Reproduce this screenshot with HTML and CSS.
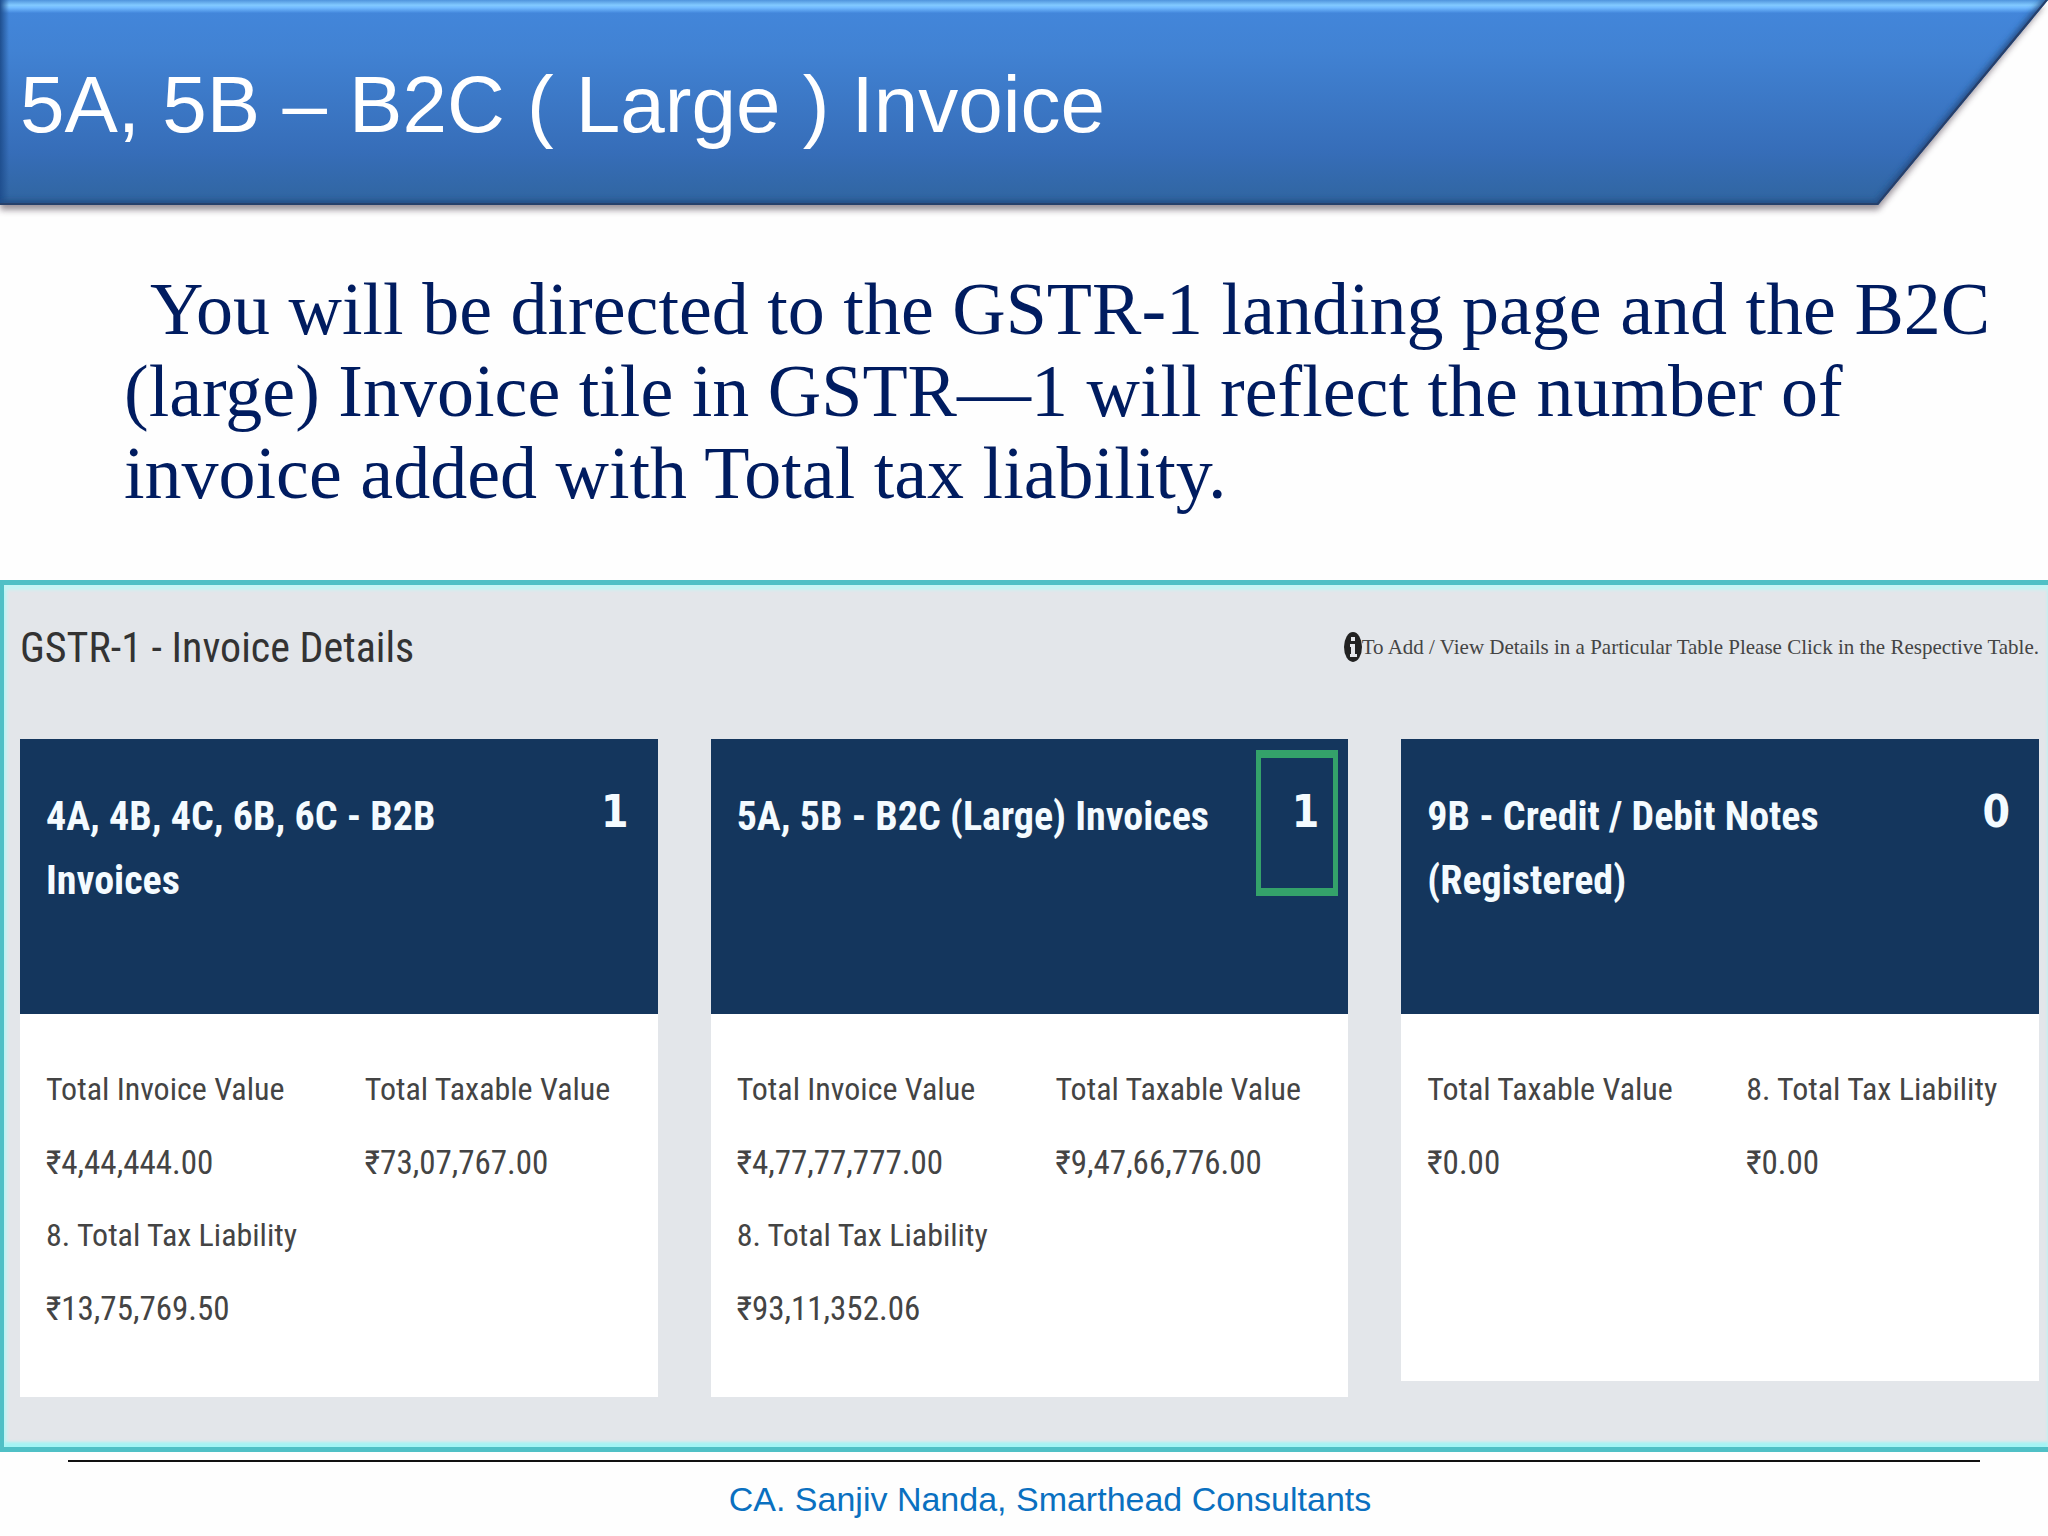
FILE: index.html
```
<!DOCTYPE html>
<html lang="en">
<head>
  <meta charset="UTF-8">
  <title>5A, 5B – B2C ( Large ) Invoice</title>
  <link rel="stylesheet" href="styles.css">
</head>
<body>
  <header class="banner">
    <svg class="banner-bg" viewBox="0 0 2048 220" preserveAspectRatio="none" aria-hidden="true">
      <defs>
        <linearGradient id="fill" x1="0" y1="0" x2="0" y2="1">
          <stop offset="0" stop-color="#4387dc"/>
          <stop offset="0.25" stop-color="#4182d3"/>
          <stop offset="0.75" stop-color="#366db8"/>
          <stop offset="1" stop-color="#30659f"/>
        </linearGradient>
        <linearGradient id="shine" x1="0" y1="0" x2="0" y2="1">
          <stop offset="0" stop-color="#4f93dc"/>
          <stop offset="0.4" stop-color="#82caff"/>
          <stop offset="0.6" stop-color="#72baff"/>
          <stop offset="1" stop-color="#4387dc"/>
        </linearGradient>
        <linearGradient id="edge" x1="0" y1="0" x2="1" y2="0">
          <stop offset="0" stop-color="#1f4f8f"/>
          <stop offset="1" stop-color="#1f4f8f" stop-opacity="0"/>
        </linearGradient>
        <filter id="soft" x="-5%" y="-20%" width="110%" height="140%"><feGaussianBlur stdDeviation="3"/></filter>
        <clipPath id="shape"><path d="M0 0H2048L1878 205H0Z"/></clipPath>
      </defs>
      <path d="M0 6H2044L1878 210H0Z" fill="#4a3a4a" opacity="0.55" filter="url(#soft)"/>
      <path d="M0 0H2048L1878 205H0Z" fill="url(#fill)"/>
      <g clip-path="url(#shape)">
        <path d="M0 0H2048V13H0Z" fill="url(#shine)"/>
        <path d="M0 0H9V205H0Z" fill="url(#edge)"/>
        <path d="M0 205H1878L2048 0" fill="none" stroke="#234a80" stroke-width="8" filter="url(#soft)"/>
        <path d="M0 205H1878L2048 0" fill="none" stroke="#27406b" stroke-width="4"/>
      </g>
    </svg>
    <h1>5A, 5B – B2C ( Large ) Invoice</h1>
  </header>

  <main>
    <p class="intro">You will be directed to the GSTR-1 landing page and the B2C<br>(large) Invoice tile in GSTR—1 will reflect the number of<br>invoice added with Total tax liability.</p>

    <section class="panel">
      <div class="panel-head">
        <h2>GSTR-1 - Invoice Details</h2>
        <p class="note">
          <svg class="info" viewBox="0 0 18 30" aria-hidden="true">
            <ellipse cx="9" cy="15" rx="9" ry="15" fill="#222"/>
            <path d="M7 5h4v4H7zM6 12h5v10h2v3H6v-3h1v-7H6z" fill="#e4e6ea"/>
          </svg>To Add / View Details in a Particular Table Please Click in the Respective Table.
        </p>
      </div>

      <div class="tiles">
        <article class="tile">
          <div class="tile-head">
            <h3>4A, 4B, 4C, 6B, 6C - B2B Invoices</h3>
            <span class="count">1</span>
          </div>
          <dl class="tile-body">
            <div><dt>Total Invoice Value</dt><dd>₹4,44,444.00</dd></div>
            <div><dt>Total Taxable Value</dt><dd>₹73,07,767.00</dd></div>
            <div><dt>8. Total Tax Liability</dt><dd>₹13,75,769.50</dd></div>
          </dl>
        </article>

        <article class="tile">
          <div class="tile-head">
            <h3>5A, 5B - B2C (Large) Invoices</h3>
            <span class="count marked">1</span>
          </div>
          <dl class="tile-body">
            <div><dt>Total Invoice Value</dt><dd>₹4,77,77,777.00</dd></div>
            <div><dt>Total Taxable Value</dt><dd>₹9,47,66,776.00</dd></div>
            <div><dt>8. Total Tax Liability</dt><dd>₹93,11,352.06</dd></div>
          </dl>
        </article>

        <article class="tile short">
          <div class="tile-head">
            <h3>9B - Credit / Debit Notes (Registered)</h3>
            <span class="count">0</span>
          </div>
          <dl class="tile-body">
            <div><dt>Total Taxable Value</dt><dd>₹0.00</dd></div>
            <div><dt>8. Total Tax Liability</dt><dd>₹0.00</dd></div>
          </dl>
        </article>
      </div>
    </section>
  </main>

  <footer>CA. Sanjiv Nanda, Smarthead Consultants</footer>
</body>
</html>
```
FILE: styles.css
```
* {
  box-sizing: border-box;
}
body {
  margin: 0;
  background: #fefefe;
  color: #444;
  font-family: 'Roboto Condensed', 'DejaVu Sans Condensed', sans-serif;
}
h1, h2, h3, p, dl, dd {
  margin: 0;
}

/* Title banner */
.banner {
  position: relative;
  height: 205px;
  padding: 4px 20px 0;
  display: flex;
  align-items: center;
}
.banner-bg {
  position: absolute;
  top: 0;
  left: 0;
  width: 100%;
  height: 220px;
}
.banner h1 {
  position: relative;
  color: #fff;
  font: 400 80px/92px 'Liberation Sans', Arial, sans-serif;
}

.intro {
  padding: 63px 0 66px 124px;
  text-indent: 26px;
  color: #001c60;
  font: 74px/82px Georgia, 'Liberation Serif', serif;
  white-space: nowrap;
}

/* GSTR-1 panel */
.panel {
  padding: 30px 9px 50px 16px;
  background: #e3e6ea;
  border: solid #4fc0c6;
  border-width: 5px 0 5px 4px;
  box-shadow: inset 0 5px 3px #c4f4f4, inset 0 -5px 3px #a4f4f4, inset 3px 0 3px #c4f4f4;
}
.panel-head {
  display: flex;
  justify-content: space-between;
  align-items: flex-start;
  height: 124px;
}
.panel-head h2 {
  color: #333;
  font-size: 42px;
  line-height: 66px;
  font-weight: 400;
}
.note {
  display: flex;
  align-items: center;
  color: #444;
  font: 21px/64px 'Liberation Serif', serif;
}
.info {
  width: 18px;
  height: 30px;
}
.tiles {
  display: grid;
  grid-template-columns: repeat(3, 1fr);
  gap: 53px;
  align-items: start;
}
.tile {
  background: #fff;
}
.tile-head {
  display: flex;
  justify-content: space-between;
  align-items: flex-start;
  height: 275px;
  padding: 11px 10px;
  background: #14365d;
  color: #f4fbff;
}
.tile-head h3 {
  padding: 35px 0 0 16px;
  font-size: 40px;
  line-height: 64px;
  font-weight: 700;
}
.count {
  flex: none;
  width: 82px;
  height: 146px;
  padding: 22px 14px 0 0;
  border: solid transparent;
  border-width: 8px 5px;
  font: 700 44px/64px 'DejaVu Sans Condensed', sans-serif;
  text-align: right;
}
.marked {
  border-color: #34a26a;
}
.tile-body {
  display: grid;
  grid-template-columns: 1fr 1fr;
  align-content: start;
  min-height: 383px;
  padding: 39px 0 50px;
  font-size: 33px;
  line-height: 73px;
}
.tile-body div {
  padding-left: 26px;
}
.tile-body dt {
  font-size: 32px;
}
.short .tile-body {
  min-height: 367px;
}

footer {
  margin: 8px 68px 0;
  padding: 17px 0 0 52px;
  border-top: 2px solid #111;
  color: #0a70c0;
  font: 34px/40px 'Liberation Sans', Arial, sans-serif;
  text-align: center;
}
```
